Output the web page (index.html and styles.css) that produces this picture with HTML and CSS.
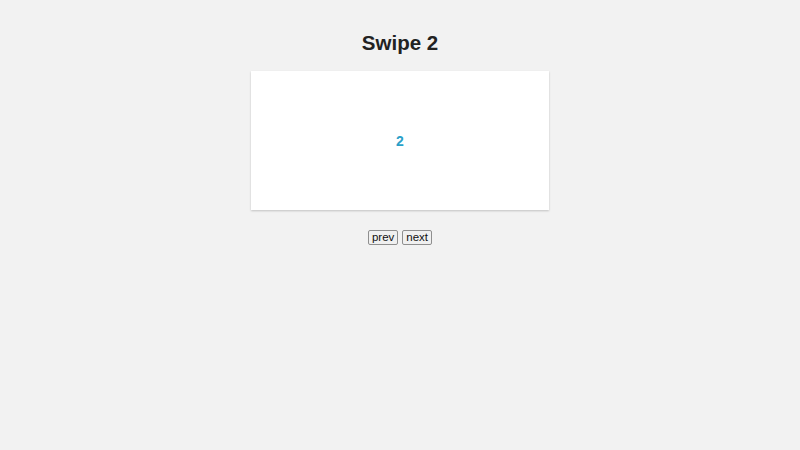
FILE: index.html
```html
<!DOCTYPE html>
<html lang="en">
<head>
    <meta charset="UTF-8">
    <title>Swipe 2</title>
    <link rel="stylesheet" href="styles.css">
</head>
<body>
    <h1 class="title">Swipe 2</h1>

    <div class="swipe">
        <div class="swipe-wrap">
            <div class="slide"><b>2</b></div>
        </div>
    </div>

    <div class="controls">
        <button onclick="prev()">prev</button>
        <button onclick="next()">next</button>
    </div>

    <script>
        let current = 2;

        function show() {
            document.querySelector('.slide b').textContent = current;
        }

        function prev() {
            current = Math.max(1, current - 1);
            show();
        }

        function next() {
            current++;
            show();
        }
    </script>
</body>
</html>
```

FILE: styles.css
```css
body {
    margin: 0;
    background: #f2f2f2;
    font-family: "Liberation Sans", Arial, sans-serif;
}

.title {
    margin: 30px 0 15px;
    font-size: 20.5px;
    line-height: 26px;
    text-align: center;
    color: #222;
}

.swipe {
    width: 298px;
    margin: 0 auto;
    background: #fff;
    box-shadow: 0 1px 2px rgba(0,0,0,0.2);
}

.slide {
    height: 139px;
    display: flex;
    justify-content: center;
    align-items: center;
    font-size: 14px;
    color: #2aa0c8;
}

.controls {
    margin-top: 20px;
    text-align: center;
    font-size: 0;
}

.controls button {
    margin: 0 2px;
    padding: 0 3px;
    font-family: "Liberation Sans", Arial, sans-serif;
    font-size: 11.5px;
    line-height: 13px;
    color: #111;
    background: #f0f0f0;
    border: 1px solid #8f8f8f;
    border-radius: 2px;
}
```
